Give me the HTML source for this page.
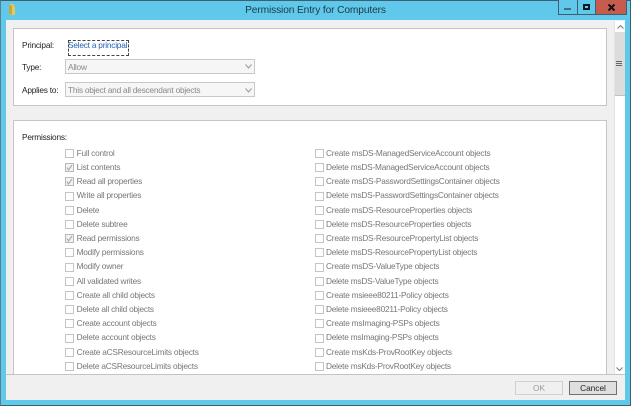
<!DOCTYPE html>
<html><head><meta charset="utf-8"><style>
*{box-sizing:border-box}
html,body{margin:0;padding:0;width:631px;height:406px;overflow:hidden;background:#60c8ea;font-family:"Liberation Sans",sans-serif}
.a{position:absolute}
.t{position:absolute;white-space:nowrap;font-size:8.3px;letter-spacing:-.22px;line-height:12px;color:#777}
.l{position:absolute;white-space:nowrap;font-size:8.3px;letter-spacing:-.22px;line-height:12px;color:#222}
.c{position:absolute;width:9px;height:9px;margin-top:1px;border:1px solid #c4c4c4;background:#fff}
.k{background:#f3f3f3;border-color:#b8b8b8}
.c svg{position:absolute;left:0;top:0}
</style></head><body>
<div class="a" style="left:0;top:0;width:631px;height:406px;border:1px solid #3f5f6e;border-left-color:#5a7f8f"></div>
<svg class="a" style="left:8px;top:3px" width="8" height="13"><path d="M1 1h4l2 3v8H3L1 10z" fill="#e8c85c"/><path d="M1 1l3 2v9L1 10z" fill="#c9a53c"/></svg>
<div class="a" style="left:0;top:4px;width:631px;text-align:center;font-size:10.2px;letter-spacing:-.12px;line-height:13px;color:#1c3a44">Permission Entry for Computers</div>
<div class="a" style="left:558px;top:0;width:20px;height:15px;border:1px solid #3f5f6e;border-top:0;background:#60c8ea"></div>
<div class="a" style="left:577px;top:0;width:19px;height:15px;border:1px solid #3f5f6e;border-top:0;background:#60c8ea"></div>
<div class="a" style="left:595px;top:0;width:32px;height:15px;border:1px solid #3f5f6e;border-top:0;background:#c75b4d"></div>
<div class="a" style="left:564px;top:8px;width:7px;height:2px;background:#3f6f80"></div>
<div class="a" style="left:583px;top:4px;width:7px;height:6px;border:2px solid #101820;background:#60c8ea"></div>
<svg class="a" style="left:608px;top:4px" width="7" height="7"><path d="M.5.5l6 6M6.5.5l-6 6" stroke="#111" stroke-width="2"/></svg>

<div class="a" style="left:6px;top:20px;width:619px;height:380px;background:#f0f0f0"></div>
<div class="a" style="left:6px;top:374px;width:619px;height:1px;background:#c4c4c4"></div>

<div class="a" style="left:13px;top:28px;width:594px;height:78px;background:#fff;border:1px solid #c6c6c6"></div>
<div class="l" style="left:22px;top:39px">Principal:</div>
<div class="a" style="left:68px;top:40px;width:61px;height:16px;border:1px dashed #444"></div>
<div class="l" style="left:68px;top:39px;color:#1f5fb5">Select a principal</div>
<div class="l" style="left:22px;top:61px">Type:</div>
<div class="a" style="left:65px;top:59px;width:190px;height:15px;border:1px solid #c8c8c8;background:#f6f6f6"></div>
<div class="t" style="left:68px;top:61px;color:#888">Allow</div>
<svg class="a" style="left:245px;top:64px" width="7" height="5"><path d="M.5.5L3.500 4 6.500.5" fill="none" stroke="#999"/></svg>
<div class="l" style="left:22px;top:84px">Applies to:</div>
<div class="a" style="left:65px;top:82px;width:190px;height:15px;border:1px solid #c8c8c8;background:#f6f6f6"></div>
<div class="t" style="left:68px;top:84px;color:#888">This object and all descendant objects</div>
<svg class="a" style="left:245px;top:88px" width="7" height="5"><path d="M.5.5L3.500 4 6.500.5" fill="none" stroke="#999"/></svg>

<div class="a" style="left:13px;top:120px;width:594px;height:254px;background:#fff;border:1px solid #c6c6c6;border-bottom:0"></div>
<div class="l" style="left:22px;top:131px">Permissions:</div>

<div class="a" style="left:614px;top:21px;width:11px;height:353px;background:#f0f0f0;border-left:1px solid #e2e2e2"></div>
<div class="a" style="left:615px;top:21px;width:10px;height:11px;background:#fff"></div>
<svg class="a" style="left:617px;top:25px" width="7" height="4"><path d="M.5 3.500L3.500.5 6.500 3.500" fill="none" stroke="#777"/></svg>
<div class="a" style="left:615px;top:32px;width:10px;height:64px;background:#dcdcdc;border-bottom:1px solid #c0c0c0"></div>
<div class="a" style="left:616px;top:61px;width:6px;height:1px;background:#666"></div>
<div class="a" style="left:616px;top:63px;width:6px;height:1px;background:#666"></div>
<div class="a" style="left:616px;top:65px;width:6px;height:1px;background:#666"></div>
<div class="a" style="left:615px;top:96px;width:10px;height:267px;background:#fff"></div>
<div class="a" style="left:615px;top:363px;width:10px;height:11px;background:#fff"></div>
<svg class="a" style="left:616px;top:367px" width="7" height="4"><path d="M.5.5L3.500 3.500 6.500.5" fill="none" stroke="#777"/></svg>

<div class="a" style="left:515px;top:381px;width:48px;height:14px;border:1px solid #d0d0d0;background:#f0f0f0;text-align:center;font-size:8.3px;line-height:12px;color:#999">OK</div>
<div class="a" style="left:569px;top:381px;width:48px;height:14px;border:1px solid #707070;background:#dfdfdf;text-align:center;font-size:8.3px;line-height:12px;color:#222">Cancel</div>

<div class="c" style="left:65px;top:148px"></div><div class="t" style="left:76.6px;top:147px">Full control</div>
<div class="c k" style="left:65px;top:162px"><svg width="7" height="7"><path d="M1 3.500l1.500 2.500 3.500-5" fill="none" stroke="#aaa" stroke-width="1.200"/></svg></div><div class="t" style="left:76.6px;top:161px">List contents</div>
<div class="c k" style="left:65px;top:176px"><svg width="7" height="7"><path d="M1 3.500l1.500 2.500 3.500-5" fill="none" stroke="#aaa" stroke-width="1.200"/></svg></div><div class="t" style="left:76.6px;top:175px">Read all properties</div>
<div class="c" style="left:65px;top:191px"></div><div class="t" style="left:76.6px;top:189px">Write all properties</div>
<div class="c" style="left:65px;top:205px"></div><div class="t" style="left:76.6px;top:204px">Delete</div>
<div class="c" style="left:65px;top:219px"></div><div class="t" style="left:76.6px;top:218px">Delete subtree</div>
<div class="c k" style="left:65px;top:233px"><svg width="7" height="7"><path d="M1 3.500l1.500 2.500 3.500-5" fill="none" stroke="#aaa" stroke-width="1.200"/></svg></div><div class="t" style="left:76.6px;top:232px">Read permissions</div>
<div class="c" style="left:65px;top:247px"></div><div class="t" style="left:76.6px;top:246px">Modify permissions</div>
<div class="c" style="left:65px;top:262px"></div><div class="t" style="left:76.6px;top:260px">Modify owner</div>
<div class="c" style="left:65px;top:276px"></div><div class="t" style="left:76.6px;top:275px">All validated writes</div>
<div class="c" style="left:65px;top:290px"></div><div class="t" style="left:76.6px;top:289px">Create all child objects</div>
<div class="c" style="left:65px;top:304px"></div><div class="t" style="left:76.6px;top:303px">Delete all child objects</div>
<div class="c" style="left:65px;top:318px"></div><div class="t" style="left:76.6px;top:317px">Create account objects</div>
<div class="c" style="left:65px;top:333px"></div><div class="t" style="left:76.6px;top:331px">Delete account objects</div>
<div class="c" style="left:65px;top:347px"></div><div class="t" style="left:76.6px;top:346px">Create aCSResourceLimits objects</div>
<div class="c" style="left:65px;top:361px"></div><div class="t" style="left:76.6px;top:360px">Delete aCSResourceLimits objects</div>

<div class="c" style="left:315px;top:148px"></div><div class="t" style="left:326px;top:147px">Create msDS-ManagedServiceAccount objects</div>
<div class="c" style="left:315px;top:162px"></div><div class="t" style="left:326px;top:161px">Delete msDS-ManagedServiceAccount objects</div>
<div class="c" style="left:315px;top:176px"></div><div class="t" style="left:326px;top:175px">Create msDS-PasswordSettingsContainer objects</div>
<div class="c" style="left:315px;top:191px"></div><div class="t" style="left:326px;top:189px">Delete msDS-PasswordSettingsContainer objects</div>
<div class="c" style="left:315px;top:205px"></div><div class="t" style="left:326px;top:204px">Create msDS-ResourceProperties objects</div>
<div class="c" style="left:315px;top:219px"></div><div class="t" style="left:326px;top:218px">Delete msDS-ResourceProperties objects</div>
<div class="c" style="left:315px;top:233px"></div><div class="t" style="left:326px;top:232px">Create msDS-ResourcePropertyList objects</div>
<div class="c" style="left:315px;top:247px"></div><div class="t" style="left:326px;top:246px">Delete msDS-ResourcePropertyList objects</div>
<div class="c" style="left:315px;top:262px"></div><div class="t" style="left:326px;top:260px">Create msDS-ValueType objects</div>
<div class="c" style="left:315px;top:276px"></div><div class="t" style="left:326px;top:275px">Delete msDS-ValueType objects</div>
<div class="c" style="left:315px;top:290px"></div><div class="t" style="left:326px;top:289px">Create msieee80211-Policy objects</div>
<div class="c" style="left:315px;top:304px"></div><div class="t" style="left:326px;top:303px">Delete msieee80211-Policy objects</div>
<div class="c" style="left:315px;top:318px"></div><div class="t" style="left:326px;top:317px">Create msImaging-PSPs objects</div>
<div class="c" style="left:315px;top:333px"></div><div class="t" style="left:326px;top:331px">Delete msImaging-PSPs objects</div>
<div class="c" style="left:315px;top:347px"></div><div class="t" style="left:326px;top:346px">Create msKds-ProvRootKey objects</div>
<div class="c" style="left:315px;top:361px"></div><div class="t" style="left:326px;top:360px">Delete msKds-ProvRootKey objects</div>
</body></html>
